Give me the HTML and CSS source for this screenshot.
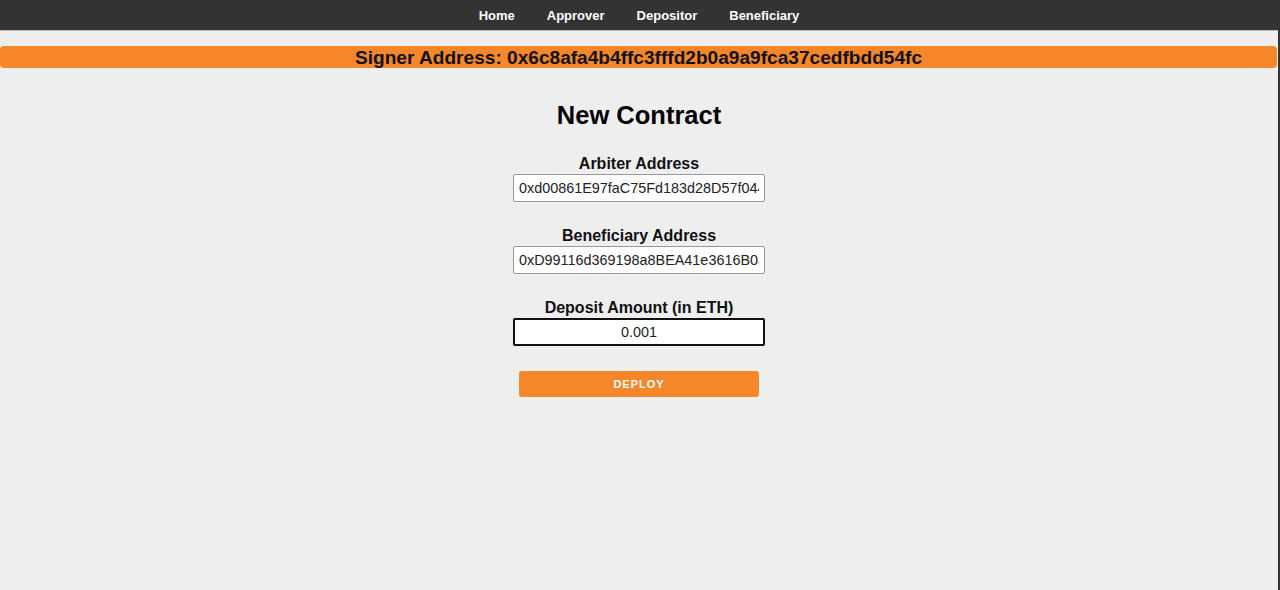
FILE: index.html
```html
<!DOCTYPE html>
<html lang="en">
<head>
  <meta charset="UTF-8">
  <meta name="viewport" content="width=device-width, initial-scale=1.0">
  <title>Escrow</title>
  <link rel="stylesheet" href="styles.css">
</head>
<body>
  <nav class="topnav">
    <a href="#">Home</a>
    <a href="#">Approver</a>
    <a href="#">Depositor</a>
    <a href="#">Beneficiary</a>
  </nav>

  <div class="signer">Signer Address: 0x6c8afa4b4ffc3fffd2b0a9a9fca37cedfbdd54fc</div>

  <div class="contract">
    <h2>New Contract</h2>
    <form class="contract-form">
      <label>
        Arbiter Address
        <input type="text" id="arbiter" value="0xd00861E97faC75Fd183d28D57f044bA21c9E3a7F">
      </label>

      <label>
        Beneficiary Address
        <input type="text" id="beneficiary" value="0xD99116d369198a8BEA41e3616B0a2eC47d18F5c3">
      </label>

      <label>
        Deposit Amount (in ETH)
        <input type="text" id="wei" class="amount" value="0.001">
      </label>

      <button type="button" class="deploy" id="deploy">Deploy</button>
    </form>
  </div>
</body>
</html>
```

FILE: styles.css
```css
/* Layout geral */
body {
  margin: 0;
  font-family: "Liberation Sans", Arial, sans-serif;
  background-color: #eeeeee;
  color: #000;
  border-right: 2px solid #333;
  min-height: 590px;
  box-sizing: border-box;
}

/* Barra de navegação */
.topnav {
  background-color: #333;
  height: 30px;
  display: flex;
  justify-content: center;
  align-items: center;
  gap: 32px;
  border-bottom: 1px solid #bbb;
}

.topnav a {
  color: #fff;
  font-size: 13px;
  font-weight: bold;
  text-decoration: none;
}

/* Endereço do signer */
.signer {
  margin: 15px 1px 0 0;
  height: 22px;
  line-height: 23px;
  background-color: #f5872a;
  border-radius: 4px;
  text-align: center;
  font-size: 19.1px;
  font-weight: bold;
  color: #111;
}

/* Formulário */
.contract {
  display: flex;
  flex-direction: column;
  align-items: center;
}

.contract h2 {
  font-size: 25.5px;
  margin: 32px 0 24px;
  line-height: 30px;
}

.contract-form {
  display: flex;
  flex-direction: column;
  align-items: center;
}

.contract-form label {
  display: flex;
  flex-direction: column;
  align-items: center;
  font-size: 16px;
  font-weight: bold;
  line-height: 19px;
  margin-bottom: 24px;
  color: #111;
}

.contract-form input {
  width: 252px;
  height: 28px;
  box-sizing: border-box;
  margin-top: 1px;
  padding: 0 5px;
  border: 1px solid #999;
  border-radius: 2px;
  background: #fff;
  font-family: "Liberation Sans", Arial, sans-serif;
  font-size: 14.4px;
  color: #222;
}

.contract-form input.amount {
  border: 2px solid #111;
  text-align: center;
}

/* Botão deploy */
.deploy {
  width: 240px;
  height: 26px;
  margin-top: 1px;
  background-color: #f5872a;
  border: none;
  border-radius: 3px;
  color: #fff;
  font-family: "Liberation Sans", Arial, sans-serif;
  font-size: 11px;
  font-weight: bold;
  letter-spacing: 1px;
  text-transform: uppercase;
  cursor: pointer;
}
```
